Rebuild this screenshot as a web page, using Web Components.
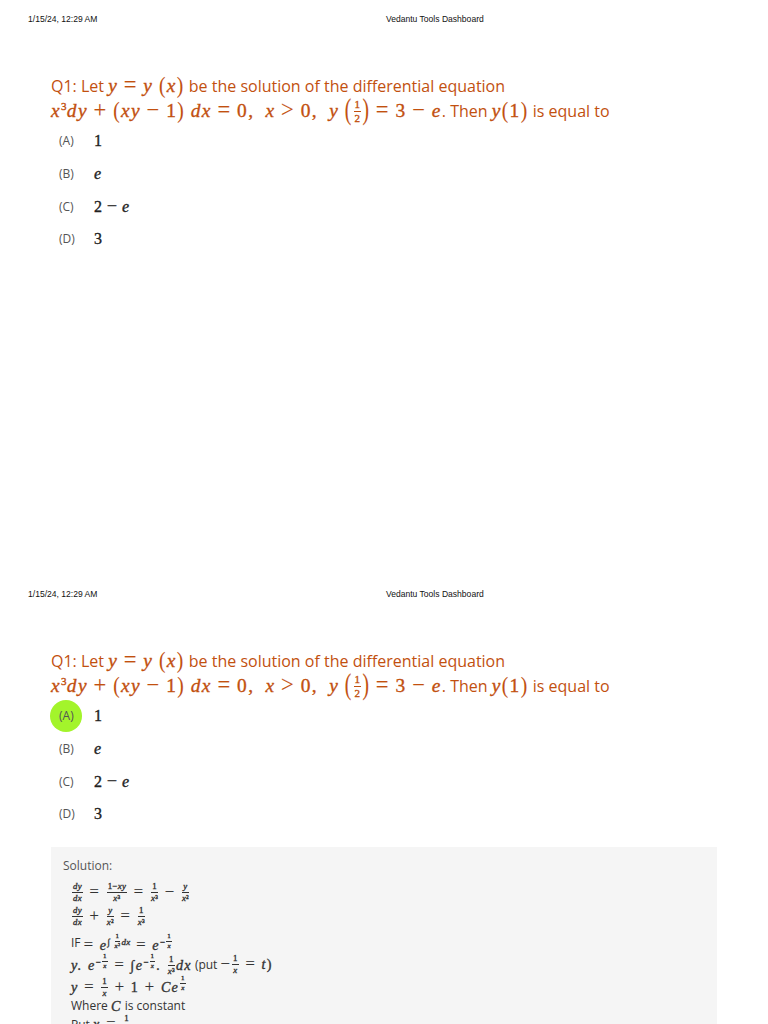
<!DOCTYPE html>
<html lang="en"><head><meta charset="utf-8"><title>Vedantu Tools Dashboard</title>
<style>
html,body{margin:0;padding:0;background:#fff;overflow:hidden;height:1024px}
body{font-family:"Open Sans","Noto Sans",sans-serif}
</style></head><body>
<script>
const def=(name,css,html)=>customElements.define(name,class extends HTMLElement{
  constructor(){super();this.attachShadow({mode:'open'}).innerHTML=`<style>${css}</style>${html}`;}
});
def('x-sheet',`:host{display:block;height:575px;box-sizing:border-box;padding:14px 0 0}
 header{display:grid;grid-template-columns:358px auto;padding:0 28px;font:8.55px/10px "Liberation Sans",Arial,sans-serif;color:#111;height:10px;margin-bottom:49px}`,
 `<header><span><slot name="date"></slot></span><span><slot name="title"></slot></span></header><slot></slot>`);
def('x-question',`:host{display:block;margin:0 51px;font:16px/24px "Open Sans","Noto Sans",sans-serif;color:#c2500f;white-space:nowrap;height:49px}`,`<slot></slot>`);
def('x-options',`:host{display:flex;flex-direction:column;margin:3px 0 0 59px}`,`<slot></slot>`);
def('x-option',`:host{display:flex;align-items:center;height:32.7px;position:relative;font:12px/16px "Open Sans","Noto Sans",sans-serif;color:#555;--ms:16px;--ls:.6px;--ws:-.5px}
 .l{width:35px;position:relative;z-index:1}
 .v{color:#222}
 :host([correct])::before{content:"";position:absolute;left:-9px;top:.4px;width:32px;height:32px;border-radius:50%;background:#a3f42b}`,
 `<span class="l"><slot name="label"></slot></span><span class="v"><slot></slot></span>`);
def('x-m',`:host{display:inline;font-family:"Liberation Serif","DejaVu Serif",serif;font-style:italic;font-size:var(--ms,19.4px);letter-spacing:var(--ls,1.4px);word-spacing:var(--ws,-.7px);-webkit-text-stroke:.35px currentColor;white-space:pre}`,`<slot></slot>`);
def('x-r',`:host{display:inline;font-style:normal}`,`<slot></slot>`);
def('x-o',`:host{display:inline;font-style:normal;font-size:1.16em;-webkit-text-stroke:.15px currentColor}`,`<slot></slot>`);
def('x-p',`:host{display:inline-block;font-family:"Liberation Serif",serif;font-style:normal;transform:scaleY(var(--py,1.2));transform-origin:50% 65%;-webkit-text-stroke:.1px currentColor;line-height:1}`,`<slot></slot>`);
def('x-frac',`:host{display:inline-flex;flex-direction:column;align-items:center;vertical-align:middle;font-size:var(--fs,11px);line-height:1;margin:0 1px;font-style:italic;letter-spacing:.3px;position:relative;top:-1px}
 .n{border-bottom:1px solid currentColor;padding:0 1px 1px;align-self:stretch;text-align:center}
 .d{padding-top:1px}`,
 `<span class="n"><slot name="n"></slot></span><span class="d"><slot name="d"></slot></span>`);
def('x-sup',`:host{display:inline-block;vertical-align:var(--up,5px);font-size:var(--ss,9px);line-height:1;--fs:7px;letter-spacing:.3px;font-style:italic}`,`<slot></slot>`);
def('x-solution',`:host{display:block;margin:16px 51px 0;padding:11px 12px 0;height:300px;background:#f5f5f5;font:12px/16px "Open Sans","Noto Sans",sans-serif;color:#555;box-sizing:border-box}
 .b{padding:8px 0 0 8px;color:#333;--ms:14.2px;--fs:8.8px;--ls:1.2px;--ws:.9px;white-space:nowrap}`,
 `<div><slot name="head"></slot></div><div class="b"><slot></slot></div>`);
def('x-row',`:host{display:flex;align-items:center;white-space:pre;height:var(--rh,23px);margin-top:var(--mt,0);color:#333}`,`<slot></slot>`);

const question=`Q1: Let <x-m>y <x-o>=</x-o> y <x-p>(</x-p>x<x-p>)</x-p></x-m> be the solution of the differential equation<br><x-m>x<x-sup style="--ss:11px;--up:7px"><x-r>3</x-r></x-sup>dy <x-o>+</x-o> <x-p>(</x-p>xy <x-o>−</x-o> <x-r>1</x-r><x-p>)</x-p> dx <x-o>=</x-o> <x-r>0,</x-r>  x <x-o>&gt;</x-o> <x-r>0,</x-r>  y <x-p style="--py:1.5">(</x-p><x-frac style="font-style:normal"><span slot="n">1</span><span slot="d">2</span></x-frac><x-p style="--py:1.5">)</x-p> <x-o>=</x-o> <x-r>3</x-r> <x-o>−</x-o> e</x-m>. Then <x-m>y<x-p>(</x-p><x-r>1</x-r><x-p>)</x-p></x-m> is equal to`;
const opts=(c)=>`<x-options>
<x-option ${c?'correct':''}><span slot="label">(A)</span><x-m><x-r>1</x-r></x-m></x-option>
<x-option><span slot="label">(B)</span><x-m>e</x-m></x-option>
<x-option><span slot="label">(C)</span><x-m><x-r>2</x-r> <x-o>−</x-o> e</x-m></x-option>
<x-option><span slot="label">(D)</span><x-m><x-r>3</x-r></x-m></x-option>
</x-options>`;
const d=s=>s.replace(/[0-9³²−]/g,c=>`<x-r>${c}</x-r>`);
const f=(a,b)=>`<x-frac><span slot="n">${d(a)}</span><span slot="d">${d(b)}</span></x-frac>`;
const head=`<span slot="date">1/15/24, 12:29 AM</span><span slot="title">Vedantu Tools Dashboard</span>`;
const sol=`<x-solution><span slot="head">Solution:</span>
<x-row><x-m>${f('dy','dx')} <x-o>=</x-o> ${f('1−xy','x³')} <x-o>=</x-o> ${f('1','x³')} <x-o>−</x-o> ${f('y','x²')}</x-m></x-row>
<x-row style="--mt:1px"><x-m>${f('dy','dx')} <x-o>+</x-o> ${f('y','x²')} <x-o>=</x-o> ${f('1','x³')}</x-m></x-row>
<x-row style="--mt:3px">IF <x-m><x-o>=</x-o> e<x-sup>∫ ${f('1','x²')}dx</x-sup> <x-o>=</x-o> e<x-sup><x-r>−</x-r>${f('1','x')}</x-sup></x-m></x-row>
<x-row style="--mt:-1px"><x-m>y. e<x-sup><x-r>−</x-r>${f('1','x')}</x-sup> <x-o>=</x-o> ∫e<x-sup><x-r>−</x-r>${f('1','x')}</x-sup>. ${f('1','x³')}dx</x-m> (put <x-m><x-o>−</x-o>${f('1','x')} <x-o>=</x-o> t<x-r>)</x-r></x-m></x-row>
<x-row style="--mt:-1px"><x-m>y <x-o>=</x-o> ${f('1','x')} <x-o>+</x-o> <x-r>1</x-r> <x-o>+</x-o> Ce<x-sup>${f('1','x')}</x-sup></x-m></x-row>
<x-row style="--rh:17px;--mt:-1px">Where <x-m>C</x-m> is constant</x-row>
<x-row style="--mt:-1px">Put <x-m>x <x-o>=</x-o> ${f('1','2')}</x-m></x-row>
</x-solution>`;
document.body.innerHTML=`<x-sheet>${head}<x-question>${question}</x-question>${opts(false)}</x-sheet>
<x-sheet>${head}<x-question>${question}</x-question>${opts(true)}${sol}</x-sheet>`;
</script>
</body></html>
